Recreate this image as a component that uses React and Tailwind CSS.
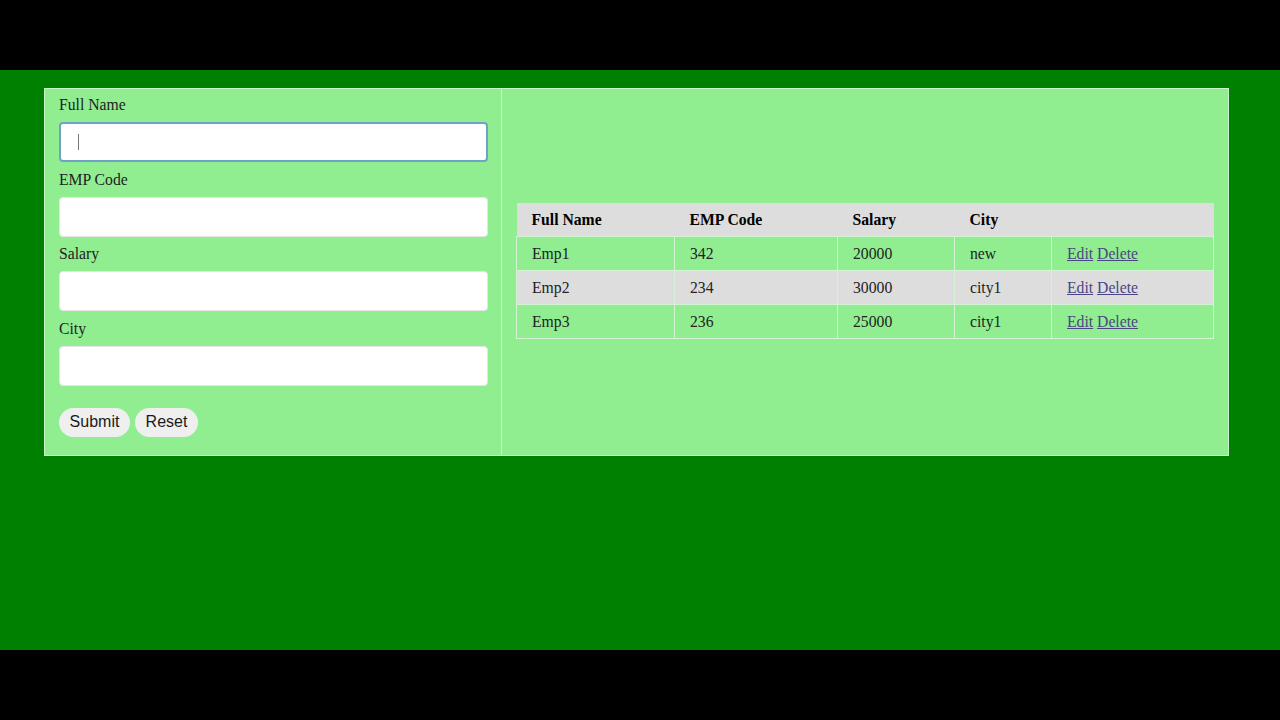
import React from "react";

const employees = [
  { name: "Emp1", code: "342", salary: "20000", city: "new" },
  { name: "Emp2", code: "234", salary: "30000", city: "city1" },
  { name: "Emp3", code: "236", salary: "25000", city: "city1" },
];

const Field = ({ label, focused }) => (
  <div>
    <label className="block h-[18px] leading-[18px] mb-[8px]">{label}</label>
    <div className="relative">
      <input
        type="text"
        className={
          "block w-full h-[40px] rounded-[4px] bg-white outline-none px-[18px] " +
          (focused ? "border-2 border-[#6ea3c8]" : "border border-[#e6e6e6]")
        }
      />
      {focused && (
        <span className="absolute left-[19px] top-[12px] w-px h-[16px] bg-[#777]" />
      )}
    </div>
  </div>
);

const App = () => {
  return (
    <div className="w-[1280px] h-[720px] bg-black flex flex-col font-['Liberation_Serif',serif] text-[15.7px] text-[#222]">
      <div className="h-[70px]" />
      <div className="h-[580px] bg-[#008000] px-[44px] pt-[18px]">
        <div className="flex w-[1185px] h-[368px] bg-[#90ee90] border border-[#c9f3c9]">
          <div className="w-[457px] border-r border-[#c9f3c9] pl-[14px] pr-[13px] pt-[7px] flex flex-col">
            <div className="flex flex-col gap-[8.5px]">
              <Field label="Full Name" focused />
              <Field label="EMP Code" />
              <Field label="Salary" />
              <Field label="City" />
            </div>
            <div className="flex gap-[5px] mt-[22px] font-['Liberation_Sans',sans-serif] text-[16px] text-[#1a1a1a]">
              <button className="h-[29px] w-[71px] rounded-full bg-[#efefef]">Submit</button>
              <button className="h-[29px] w-[63px] rounded-full bg-[#efefef]">Reset</button>
            </div>
          </div>
          <div className="flex-1 flex items-center px-[14px] pb-[2px]">
            <table className="table-fixed border-collapse w-[697px]">
              <colgroup>
                <col className="w-[158px]" />
                <col className="w-[163px]" />
                <col className="w-[117px]" />
                <col className="w-[97px]" />
                <col className="w-[162px]" />
              </colgroup>
              <thead>
                <tr className="bg-[#dddddd] h-[34px]">
                  <th className="text-left font-bold px-[15px] text-black">Full Name</th>
                  <th className="text-left font-bold px-[15px] text-black">EMP Code</th>
                  <th className="text-left font-bold px-[15px] text-black">Salary</th>
                  <th className="text-left font-bold px-[15px] text-black">City</th>
                  <th />
                </tr>
              </thead>
              <tbody>
                {employees.map((emp, i) => (
                  <tr key={i} className={"h-[34px] " + (i === 1 ? "bg-[#dddddd]" : "")}>
                    <td className="px-[15px] border border-[#d4f3d4]">{emp.name}</td>
                    <td className="px-[15px] border border-[#d4f3d4]">{emp.code}</td>
                    <td className="px-[15px] border border-[#d4f3d4]">{emp.salary}</td>
                    <td className="px-[15px] border border-[#d4f3d4]">{emp.city}</td>
                    <td className="px-[15px] border border-[#d4f3d4]">
                      <a href="#" className="underline text-[#4b4585]">Edit</a>{" "}
                      <a href="#" className="underline text-[#4b4585]">Delete</a>
                    </td>
                  </tr>
                ))}
              </tbody>
            </table>
          </div>
        </div>
      </div>
      <div className="flex-1" />
    </div>
  );
};

export default App;
